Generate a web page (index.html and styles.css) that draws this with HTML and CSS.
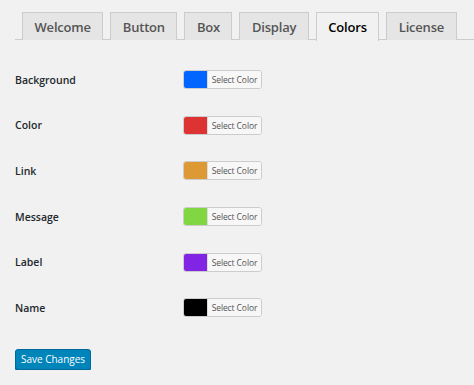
FILE: index.html
```html
<!DOCTYPE html>
<html lang="en">
<head>
    <meta charset="UTF-8">
    <title>Colors</title>
    <link rel="stylesheet" href="styles.css">
</head>
<body>
    <div class="wrap">
        <nav class="tabs">
            <a href="#" class="tab">Welcome</a>
            <a href="#" class="tab">Button</a>
            <a href="#" class="tab">Box</a>
            <a href="#" class="tab">Display</a>
            <a href="#" class="tab active">Colors</a>
            <a href="#" class="tab">License</a>
        </nav>
        <form class="settings">
            <div class="row">
                <label>Background</label>
                <div class="picker"><span class="swatch" style="background:#0066ff"></span><button type="button">Select Color</button></div>
            </div>
            <div class="row">
                <label>Color</label>
                <div class="picker"><span class="swatch" style="background:#dd3333"></span><button type="button">Select Color</button></div>
            </div>
            <div class="row">
                <label>Link</label>
                <div class="picker"><span class="swatch" style="background:#dd9933"></span><button type="button">Select Color</button></div>
            </div>
            <div class="row">
                <label>Message</label>
                <div class="picker"><span class="swatch" style="background:#81d742"></span><button type="button">Select Color</button></div>
            </div>
            <div class="row">
                <label>Label</label>
                <div class="picker"><span class="swatch" style="background:#8224e3"></span><button type="button">Select Color</button></div>
            </div>
            <div class="row">
                <label>Name</label>
                <div class="picker"><span class="swatch" style="background:#000000"></span><button type="button">Select Color</button></div>
            </div>
            <button type="submit" class="save-button">Save Changes</button>
        </form>
    </div>
</body>
</html>
```

FILE: styles.css
```css
* {
    margin: 0;
    padding: 0;
    box-sizing: border-box;
    font-family: 'Open Sans', 'Noto Sans', sans-serif;
}

body {
    background: #f1f1f1;
    color: #23282d;
}

.wrap {
    padding: 12px 0 0 15px;
}

.tabs {
    display: flex;
    gap: 7px;
    padding-left: 7px;
    border-bottom: 1px solid #cccccc;
    height: 28px;
}

.tab {
    display: flex;
    align-items: center;
    justify-content: center;
    height: 28px;
    padding: 0 11.5px;
    background: #e5e5e5;
    border: 1px solid #cccccc;
    border-bottom: none;
    color: #555555;
    text-decoration: none;
    font-size: 13px;
    font-weight: 600;
    letter-spacing: -0.2px;
}

.tab.active {
    background: #f1f1f1;
    color: #000000;
    height: 29px;
}

.settings {
    padding-top: 17px;
}

.row {
    display: flex;
    align-items: center;
    height: 45.6px;
}

.row label {
    width: 168px;
    font-size: 10.5px;
    font-weight: 600;
    color: #23282d;
}

.picker {
    display: flex;
    height: 19px;
    border: 1px solid #cccccc;
    border-radius: 3px;
    background: #f7f7f7;
    overflow: hidden;
}

.swatch {
    width: 23px;
    height: 100%;
}

.picker button {
    width: 54px;
    border: none;
    border-left: 1px solid #dddddd;
    background: #f7f7f7;
    color: #555555;
    font-size: 8.5px;
    letter-spacing: -0.1px;
    cursor: pointer;
}

.save-button {
    margin-top: 18px;
    width: 76px;
    height: 21px;
    background: #0085ba;
    border: 1px solid #006799;
    border-radius: 3px;
    box-shadow: 0 1px 0 #006799;
    color: #ffffff;
    font-size: 10px;
    cursor: pointer;
}
```
